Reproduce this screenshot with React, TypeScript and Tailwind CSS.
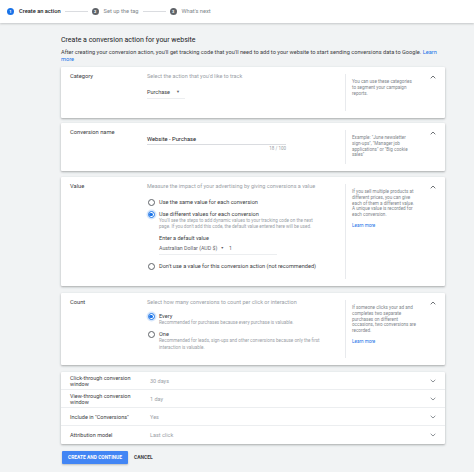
import React from "react";

function ChevronUp() {
  return (
    <svg width="6" height="4" viewBox="0 0 6 4" className="block">
      <path d="M0.7 3.3 L3 1 L5.3 3.3" fill="none" stroke="#5f6368" strokeWidth="0.9" />
    </svg>
  );
}

function ChevronDown() {
  return (
    <svg width="6" height="4" viewBox="0 0 6 4" className="block">
      <path d="M0.7 0.8 L3 3 L5.3 0.8" fill="none" stroke="#80868b" strokeWidth="0.9" />
    </svg>
  );
}

function Radio({ checked }: { checked?: boolean }) {
  if (checked) {
    return (
      <span className="flex h-[7px] w-[7px] shrink-0 items-center justify-center rounded-full border border-[#1a73e8] shadow-[0_0_0_1.5px_rgba(26,115,232,0.18)]">
        <span className="h-[3.5px] w-[3.5px] rounded-full bg-[#1a73e8]" />
      </span>
    );
  }
  return <span className="h-[7px] w-[7px] shrink-0 rounded-full border border-[#5f6368]" />;
}

function Step({ n, label, active }: { n: number; label: string; active?: boolean }) {
  return (
    <div className="flex items-center gap-[5px]">
      <span
        className={`flex h-[7px] w-[7px] items-center justify-center rounded-full text-[4px] font-bold leading-none text-white ${
          active ? "bg-[#1a73e8]" : "bg-[#5f6368]"
        }`}
      >
        {n}
      </span>
      <span className={`text-[5.7px] leading-none ${active ? "font-medium text-[#202124]" : "text-[#80868b]"}`}>
        {label}
      </span>
    </div>
  );
}

type CardProps = {
  label: string;
  h: string;
  hint: React.ReactNode;
  children: React.ReactNode;
};

function Card({ label, h, hint, children }: CardProps) {
  return (
    <div className={`flex rounded-[1px] bg-white shadow-[0_1px_2px_rgba(60,64,67,0.3),0_1px_3px_rgba(60,64,67,0.12)] ${h}`}>
      <div className="w-[86px] shrink-0 pl-[9px] pt-[5px] text-[5.75px] leading-[8px] text-[#3c4043]">{label}</div>
      <div className="w-[198px] shrink-0 pt-[5px]">{children}</div>
      <div className="my-[7px] w-[75px] shrink-0 border-l border-[#e8eaed] pl-[6px] pt-[5px] text-[4.6px] leading-[5.6px] text-[#80868b]">
        {hint}
      </div>
      <div className="flex flex-1 justify-center pt-[8px]">
        <ChevronUp />
      </div>
    </div>
  );
}

function ExpRow({ label, value, last }: { label: React.ReactNode; value: string; last?: boolean }) {
  return (
    <div className={`flex h-[18px] items-center ${last ? "" : "border-b border-[#eceef0]"}`}>
      <div className="w-[89px] shrink-0 pl-[9px] text-[5.5px] leading-[6px] text-[#3c4043]">{label}</div>
      <div className="w-[270px] shrink-0 text-[5.5px] text-[#9aa0a6]">{value}</div>
      <div className="flex flex-1 justify-center">
        <ChevronDown />
      </div>
    </div>
  );
}

export default function App() {
  return (
    <div className="h-[472px] w-[474px] overflow-hidden bg-[#f1f3f4] font-['Roboto',sans-serif]">
      <div className="relative z-10 flex h-[23px] items-center bg-white pl-[7px] shadow-[0_1px_2px_rgba(60,64,67,0.25)]">
        <Step n={1} label="Create an action" active />
        <span className="mx-[4px] h-px w-[23px] bg-[#dadce0]" />
        <Step n={2} label="Set up the tag" />
        <span className="mx-[4px] h-px w-[23px] bg-[#dadce0]" />
        <Step n={3} label="What's next" />
      </div>

      <div className="ml-[61px] w-[384px]">
        <h1 className="mt-[13px] text-[7px] leading-[9px] text-[#202124]">Create a conversion action for your website</h1>
        <p className="mt-[4px] text-[5.65px] leading-[7.2px] text-[#3c4043]">
          After creating your conversion action, you'll get tracking code that you'll need to add to your website to start
          sending conversions data to Google. <span className="text-[#1a73e8]">Learn</span>
          <br />
          <span className="text-[#1a73e8]">more</span>
        </p>

        <div className="mt-[4px]">
          <Card
            label="Category"
            h="h-[51px]"
            hint={
              <>
                You can use these categories
                <br />
                to segment your campaign
                <br />
                reports.
              </>
            }
          >
            <div className="text-[5.5px] leading-[8px] text-[#9aa0a6]">Select the action that you'd like to track</div>
            <div className="mt-[5px] flex h-[14px] w-[38px] items-center border-b border-[#eceef0] text-[5.5px] text-[#3c4043]">
              Purchase
              <span className="ml-[6px] text-[4px] text-[#5f6368]">▼</span>
            </div>
          </Card>
        </div>

        <div className="mt-[5px]">
          <Card
            label="Conversion name"
            h="h-[48px]"
            hint={
              <>
                Example: "June newsletter
                <br />
                sign-ups", "Manager job
                <br />
                applications" or "Big cookie
                <br />
                sales"
              </>
            }
          >
            <div className="mt-[5px] h-[12px] w-[139px] border-b border-[#dadce0] text-[5.75px] leading-[12px] text-[#202124]">
              Website - Purchase
            </div>
            <div className="mt-[1px] w-[139px] text-right text-[4.5px] leading-[6px] text-[#9aa0a6]">18 / 100</div>
          </Card>
        </div>

        <div className="mt-[6px]">
          <Card
            label="Value"
            h="h-[109px]"
            hint={
              <>
                If you sell multiple products at
                <br />
                different prices, you can give
                <br />
                each of them a different value.
                <br />
                A unique value is recorded for
                <br />
                each conversion.
                <div className="mt-[6px] text-[#1a73e8]">Learn more</div>
              </>
            }
          >
            <div className="text-[5.5px] leading-[8px] text-[#9aa0a6]">
              Measure the impact of your advertising by giving conversions a value
            </div>
            <div className="mt-[8px] flex h-[8px] items-center gap-[4.5px] pl-[0.5px]">
              <Radio />
              <span className="text-[5.6px] text-[#3c4043]">Use the same value for each conversion</span>
            </div>
            <div className="mt-[4px] flex h-[8px] items-center gap-[4.5px] pl-[0.5px]">
              <Radio checked />
              <span className="text-[5.6px] text-[#3c4043]">Use different values for each conversion</span>
            </div>
            <div className="pl-[12px] text-[4.6px] leading-[6px] text-[#9aa0a6]">
              You'll see the steps to add dynamic values to your tracking code on the next
              <br />
              page. If you don't add this code, the default value entered here will be used.
            </div>
            <div className="mt-[4px] pl-[12px] text-[5.5px] leading-[8px] text-[#3c4043]">Enter a default value</div>
            <div className="ml-[12px] mt-[1px] flex h-[12px] w-[118px] items-center border-b border-[#eceef0] text-[5.3px] text-[#5f6368]">
              Australian Dollar (AUD $)
              <span className="ml-[3px] text-[3.6px]">▼</span>
              <span className="ml-[5px]">1</span>
            </div>
            <div className="mt-[7px] flex h-[8px] items-center gap-[4.5px] pl-[0.5px]">
              <Radio />
              <span className="text-[5.6px] text-[#3c4043]">Don't use a value for this conversion action (not recommended)</span>
            </div>
          </Card>
        </div>

        <div className="mt-[7px]">
          <Card
            label="Count"
            h="h-[72px]"
            hint={
              <>
                If someone clicks your ad and
                <br />
                completes two separate
                <br />
                purchases on different
                <br />
                occasions, two conversions are
                <br />
                recorded.
                <div className="mt-[6px] text-[#1a73e8]">Learn more</div>
              </>
            }
          >
            <div className="text-[5.5px] leading-[8px] text-[#9aa0a6]">
              Select how many conversions to count per click or interaction
            </div>
            <div className="mt-[6px] flex h-[8px] items-center gap-[4.5px] pl-[0.5px]">
              <Radio checked />
              <span className="text-[5.6px] text-[#3c4043]">Every</span>
            </div>
            <div className="pl-[12px] text-[4.6px] leading-[6px] text-[#9aa0a6]">
              Recommended for purchases because every purchase is valuable.
            </div>
            <div className="mt-[4px] flex h-[8px] items-center gap-[4.5px] pl-[0.5px]">
              <Radio />
              <span className="text-[5.6px] text-[#3c4043]">One</span>
            </div>
            <div className="pl-[12px] text-[4.6px] leading-[6.5px] text-[#9aa0a6]">
              Recommended for leads, sign-ups and other conversions because only the first
              <br />
              interaction is valuable.
            </div>
          </Card>
        </div>

        <div className="mt-[7px] rounded-[1px] bg-white shadow-[0_1px_2px_rgba(60,64,67,0.3),0_1px_3px_rgba(60,64,67,0.12)]">
          <ExpRow
            label={
              <>
                Click-through conversion
                <br />
                window
              </>
            }
            value="30 days"
          />
          <ExpRow
            label={
              <>
                View-through conversion
                <br />
                window
              </>
            }
            value="1 day"
          />
          <ExpRow label={'Include in "Conversions"'} value="Yes" />
          <ExpRow label="Attribution model" value="Last click" last />
        </div>

        <div className="mt-[7px] flex items-center pl-[1px]">
          <button className="flex h-[13px] w-[66px] items-center justify-center rounded-[1px] bg-[#4285f4] text-[4.9px] font-bold text-white shadow-[0_1px_2px_rgba(60,64,67,0.3)]">
            CREATE AND CONTINUE
          </button>
          <button className="ml-[6px] text-[4.9px] font-bold text-[#3c4043]">CANCEL</button>
        </div>
      </div>
    </div>
  );
}
